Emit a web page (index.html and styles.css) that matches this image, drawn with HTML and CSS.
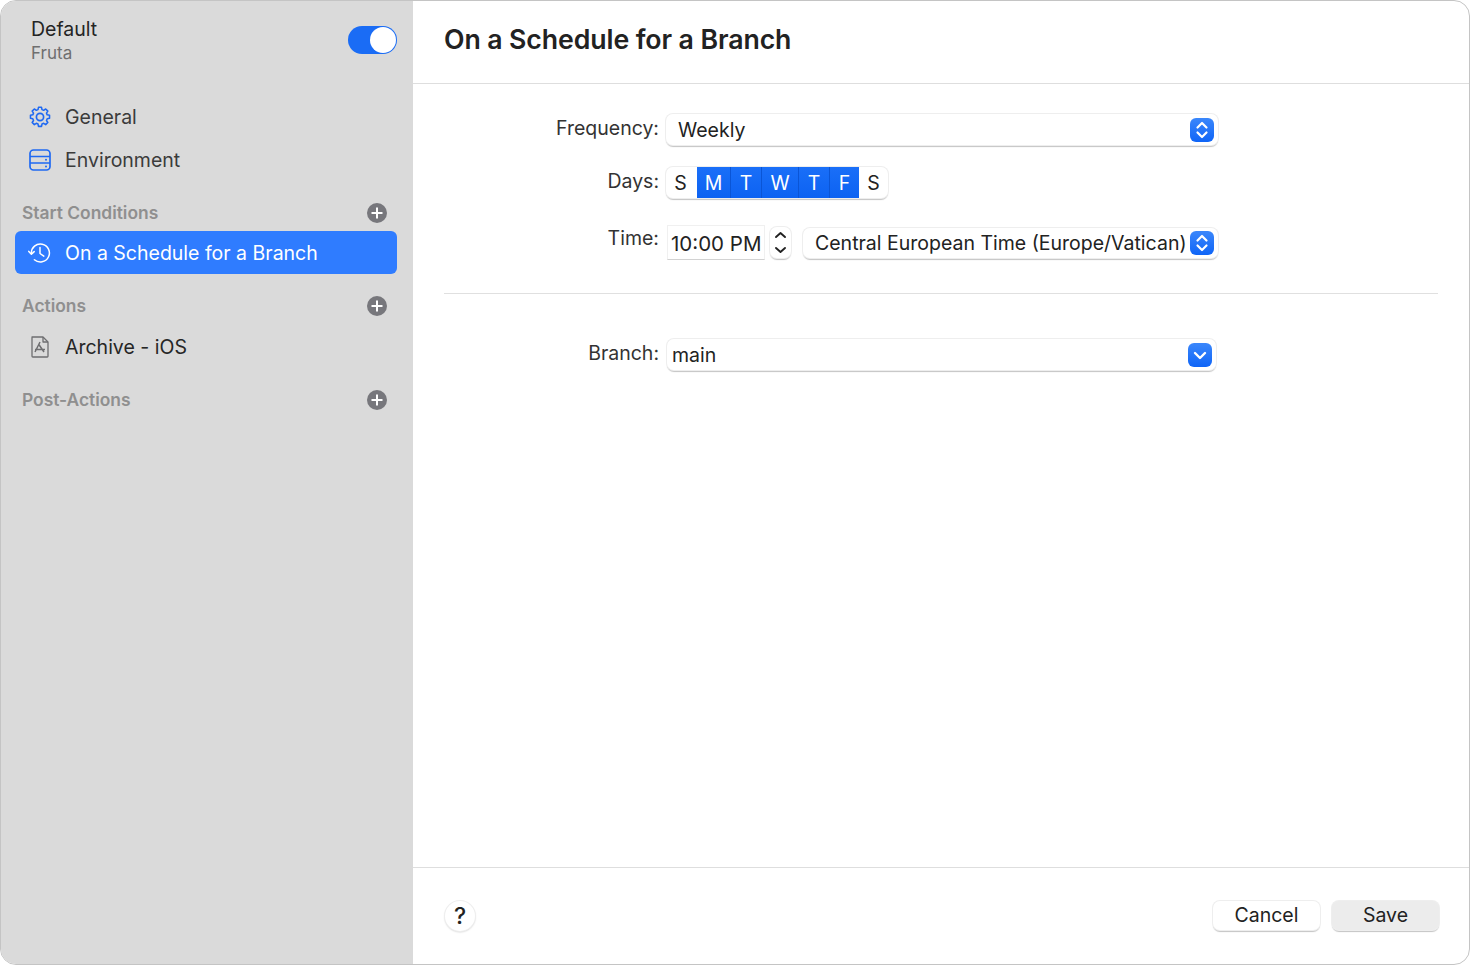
FILE: index.html
```html
<!DOCTYPE html>
<html lang="en">
<head>
<meta charset="utf-8">
<title>On a Schedule for a Branch</title>
<link rel="stylesheet" href="styles.css">
</head>
<body>
<div class="window">
  <aside class="sidebar">
    <div class="workflow">
      <div class="workflow-text">
        <div class="workflow-name">Default</div>
        <div class="workflow-product">Fruta</div>
      </div>
      <div class="toggle"><span class="knob"></span></div>
    </div>
    <nav class="nav">
      <div class="nav-item">
        <svg class="icon" viewBox="0 0 24 24" fill="none" stroke="#1f69f2" stroke-width="1.7" stroke-linejoin="round"><path d="M10.300 2.200h3.400l.5 2.600 1.900.8 2.200-1.500 2.400 2.400-1.500 2.200.8 1.900 2.600.5v3.400l-2.600.5-.8 1.900 1.500 2.200-2.400 2.400-2.200-1.500-1.900.8-.5 2.600h-3.400l-.5-2.600-1.900-.8-2.200 1.500-2.400-2.400 1.500-2.200-.8-1.900-2.600-.5v-3.400l2.600-.5.8-1.900-1.500-2.200 2.400-2.400 2.200 1.500 1.900-.8z" transform="translate(12 12) scale(.9) translate(-12 -13)"/><circle cx="12" cy="12" r="3.600"/></svg>
        <span>General</span>
      </div>
      <div class="nav-item">
        <svg class="icon" viewBox="0 0 24 24" fill="none" stroke="#1f69f2" stroke-width="1.7"><rect x="2" y="2" width="20" height="20" rx="3.500"/><path d="M2 8.500h20M2 15h20"/><circle cx="18" cy="11.800" r="1" fill="#1f69f2" stroke="none"/><circle cx="18" cy="18.500" r="1" fill="#1f69f2" stroke="none"/></svg>
        <span>Environment</span>
      </div>
    </nav>
    <div class="section-head section-start">
      <span>Start Conditions</span>
      <svg class="plus" viewBox="0 0 20 20"><circle cx="10" cy="10" r="10" fill="#77777c"/><path d="M10 4.500v11M4.500 10h11" stroke="#fff" stroke-width="2"/></svg>
    </div>
    <div class="selected-item">
      <svg class="icon" viewBox="0 0 24 24" fill="none" stroke="#fff" stroke-width="1.500" stroke-linecap="round" stroke-linejoin="round"><path d="M3.400 12.500a9 9 0 1 1 3 6.200"/><path d="M.8 10.400l2.600 2.800 2.800-2.600"/><path d="M12 6.500v6l3.800 2.600"/></svg>
      <span>On a Schedule for a Branch</span>
    </div>
    <div class="section-head section-actions">
      <span>Actions</span>
      <svg class="plus" viewBox="0 0 20 20"><circle cx="10" cy="10" r="10" fill="#77777c"/><path d="M10 4.500v11M4.500 10h11" stroke="#fff" stroke-width="2"/></svg>
    </div>
    <div class="nav-item action-item">
      <svg class="icon" viewBox="0 0 24 24" fill="none" stroke="#6e6e70" stroke-width="1.300" stroke-linejoin="round"><path d="M4 2h11l5 5v14.200a.8.8 0 0 1-.8.8H4.800a.8.8 0 0 1-.8-.8V2.800A.8.8 0 0 1 4.800 2z"/><path d="M15 2v5h5"/><path d="M12 7l-5 10M10.500 9l5.500 8M7 14.500h10" stroke-width="1.500"/></svg>
      <span>Archive - iOS</span>
    </div>
    <div class="section-head section-post">
      <span>Post-Actions</span>
      <svg class="plus" viewBox="0 0 20 20"><circle cx="10" cy="10" r="10" fill="#77777c"/><path d="M10 4.500v11M4.500 10h11" stroke="#fff" stroke-width="2"/></svg>
    </div>
  </aside>
  <main class="main">
    <header class="header"><h1>On a Schedule for a Branch</h1></header>
    <section class="form">
      <div class="row row-frequency">
        <label class="label">Frequency:</label>
        <div class="select select-frequency">
          <span>Weekly</span>
          <span class="arrows"><svg viewBox="0 0 24 24" fill="none" stroke="#fff" stroke-width="2.200" stroke-linecap="round" stroke-linejoin="round"><path d="M7.500 9.500L12 5l4.500 4.500M7.500 14.500L12 19l4.500-4.500"/></svg></span>
        </div>
      </div>
      <div class="row row-days">
        <label class="label">Days:</label>
        <div class="days">
          <span class="day day-s1">S</span>
          <span class="day on day-m">M</span>
          <span class="day on day-t">T</span>
          <span class="day on day-w">W</span>
          <span class="day on day-t2">T</span>
          <span class="day on day-f">F</span>
          <span class="day day-s2">S</span>
        </div>
      </div>
      <div class="row row-time">
        <label class="label label-time">Time:</label>
        <div class="time-field">10:00 PM</div>
        <div class="stepper">
          <svg viewBox="0 0 21 31" fill="none" stroke="#222" stroke-width="1.900" stroke-linecap="round" stroke-linejoin="round"><path d="M6 10L10.500 6l4.500 4M6 21l4.500 4 4.500-4"/></svg>
        </div>
        <div class="select select-zone">
          <span>Central European Time (Europe/Vatican)</span>
          <span class="arrows"><svg viewBox="0 0 24 24" fill="none" stroke="#fff" stroke-width="2.200" stroke-linecap="round" stroke-linejoin="round"><path d="M7.500 9.500L12 5l4.500 4.500M7.500 14.500L12 19l4.500-4.500"/></svg></span>
        </div>
      </div>
      <hr class="divider">
      <div class="row row-branch">
        <label class="label">Branch:</label>
        <div class="select select-branch">
          <span>main</span>
          <span class="arrows"><svg viewBox="0 0 24 24" fill="none" stroke="#fff" stroke-width="2.400" stroke-linecap="round" stroke-linejoin="round"><path d="M7 10l5 5 5-5"/></svg></span>
        </div>
      </div>
    </section>
    <footer class="footer">
      <button class="help">?</button>
      <div class="actions">
        <button class="btn">Cancel</button>
        <button class="btn btn-save">Save</button>
      </div>
    </footer>
  </main>
</div>
</body>
</html>
```
FILE: styles.css
```css
* { box-sizing: border-box; }
html, body { margin: 0; height: 100%; background: #fff; }
body { font-family: Inter, "Liberation Sans", sans-serif; color: #222; overflow: hidden; }
.window { display: flex; width: 1470px; height: 965px; border: 1px solid #c4c4c4; border-radius: 16px; overflow: hidden; background: #fff; }

.sidebar { width: 412px; flex: none; background: #dadada; padding-left: 14px; padding-right: 16px; }
.workflow { display: flex; justify-content: space-between; align-items: center; padding: 16px 0 0 16px; height: 63px; }
.workflow-name { font-size: 19.500px; line-height: 24px; color: #242424; }
.workflow-product { font-size: 17px; line-height: 24px; color: #6f6f6f; }
.toggle { width: 49px; height: 28px; border-radius: 14px; background: #1a6cf5; position: relative; margin-top: -2px; }
.knob { position: absolute; right: 1px; top: 1px; width: 26px; height: 26px; border-radius: 50%; background: #fff; }

.nav { margin-top: 33px; display: flex; flex-direction: column; gap: 3px; }
.nav-item { display: flex; align-items: center; height: 40px; padding-left: 13px; font-size: 19.500px; color: #3b3b3b; gap: 13px; }
.icon { width: 24px; height: 24px; flex: none; }

.section-head { display: flex; align-items: center; justify-content: space-between; font-size: 17.400px; font-weight: 600; color: #8f8f8f; padding-left: 7px; padding-right: 10px; height: 24px; }
.section-start { margin-top: 20px; }
.section-actions { margin-top: 19px; }
.section-post { margin-top: 20px; }
.plus { width: 20px; height: 20px; margin-top: 2px; }
.selected-item { display: flex; align-items: center; margin-top: 7px; height: 43px; background: #2f7cff; border-radius: 6px; color: #fff; font-size: 19.500px; padding-left: 13px; gap: 13px; }
.action-item { color: #262626; margin-top: 10px; }

.main { flex: 1; display: flex; flex-direction: column; min-width: 0; }
.header { height: 83px; flex: none; border-bottom: 1px solid #dedede; padding-left: 31px; display: flex; align-items: center; }
.header h1 { margin: 0 0 7px; font-size: 26.700px; font-weight: 600; letter-spacing: -.1px; color: #222; }

.form { flex: 1; padding: 0 30px 0 31px; }
.row { display: flex; align-items: center; }
.label { width: 215px; flex: none; text-align: right; font-size: 19.500px; color: #333; margin-bottom: 4px; }
.label-time { margin-bottom: 10px; }
.select { display: flex; align-items: center; justify-content: space-between; background: #fff; border-radius: 7px; box-shadow: 0 0 0 1px #eee, 0 2px 1px #c4c4c4; font-size: 19.500px; color: #222; }
.arrows { width: 24px; height: 24px; border-radius: 6px; background: linear-gradient(#3b87fb, #0f65f7); display: flex; flex: none; }
.arrows svg { width: 24px; height: 24px; }

.row-frequency { margin-top: 30px; }
.select-frequency { width: 552px; height: 31px; margin-left: 7px; padding: 0 4px 0 12px; }
.row-days { margin-top: 22px; }
.days { display: flex; height: 31px; margin-left: 7px; border-radius: 7px; background: #fff; box-shadow: 0 0 0 1px #eee, 0 2px 1px #c4c4c4; overflow: hidden; width: 222px; }
.day { display: flex; align-items: center; justify-content: center; font-size: 19.500px; color: #222; flex: none; }
.day.on { background: linear-gradient(#1a6ff8, #0c62f2); color: #fff; border-right: 1px solid #0a55d6; }
.day-s1 { width: 31px; padding-right: 2px; }
.day-m { width: 34px; }
.day-t { width: 31px; }
.day-w { width: 37px; }
.day-t2 { width: 31px; }
.day-f { width: 29px; border-right: 0 !important; }
.day-s2 { width: 29px; }
.row-time { margin-top: 27px; }
.time-field { width: 98px; height: 35px; margin-left: 8px; border: 1px solid #f0f0f0; border-bottom-color: #d2d2d2; font-size: 20.500px; line-height: 35px; padding-left: 3px; white-space: nowrap; color: #222; }
.stepper { width: 21px; height: 31px; margin-left: 5px; border-radius: 7px; background: #fff; box-shadow: 0 0 0 1px #eee, 0 2px 1px #c4c4c4; }
.stepper svg { width: 21px; height: 31px; display: block; }
.select-zone { width: 415px; height: 30px; margin-left: 12px; padding: 0 4px 0 12px; white-space: nowrap; }
.divider { border: 0; border-top: 1px solid #e0e0e0; margin: 33px 1px 0 0; }
.row-branch { margin-top: 45px; }
.select-branch { width: 549px; height: 31px; margin-left: 8px; padding: 0 4px 0 5px; }

.footer { height: 97px; flex: none; border-top: 1px solid #dedede; display: flex; align-items: flex-start; justify-content: space-between; padding: 33px 30px 0 32px; }
.actions { display: flex; gap: 12px; }
button { font-family: inherit; border: 0; padding: 0; cursor: default; color: #222; }
.help { width: 30px; height: 30px; border-radius: 50%; background: #fff; box-shadow: 0 0 0 1px #eee, 0 1px 2px #bbb; font-size: 23px; font-weight: 500; }
.btn { width: 107px; height: 29px; padding-bottom: 2px; border-radius: 7px; background: #fff; box-shadow: 0 0 0 1px #eee, 0 2px 1px #c4c4c4; font-size: 19.500px; }
.btn-save { background: #ececec; }
```
